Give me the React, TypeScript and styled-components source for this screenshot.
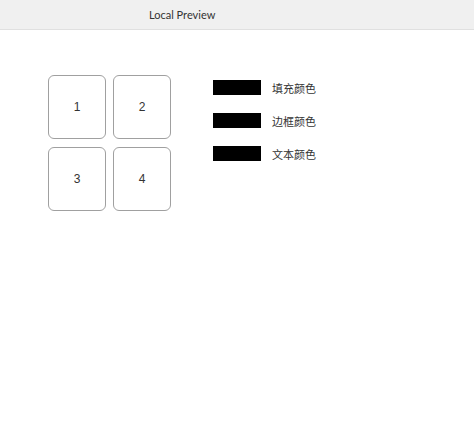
import React from "react";
import styled, { createGlobalStyle } from "styled-components";

const GlobalStyle = createGlobalStyle`
  html, body {
    margin: 0;
    padding: 0;
    background: #ffffff;
    font-family: "Liberation Sans", Arial, sans-serif;
  }
`;

const Page = styled.div`
  width: 474px;
  height: 442px;
  background: #fff;
`;

const Header = styled.div`
  height: 29px;
  background: #f0f0f0;
  border-bottom: 1px solid #e0e0e0;
  display: flex;
  align-items: center;
  padding-left: 149px;
  font-family: Lato, "Open Sans", sans-serif;
  font-size: 11px;
  color: #333;
`;

const Body = styled.div`
  display: flex;
  align-items: flex-start;
  gap: 42px;
  padding: 45px 0 0 48px;
`;

const Grid = styled.div`
  display: grid;
  grid-template-columns: repeat(2, 58px);
  grid-auto-rows: 64px;
  gap: 8px 7px;
`;

const Cell = styled.div`
  box-sizing: border-box;
  border: 1px solid #a0a0a0;
  border-radius: 6px;
  display: flex;
  align-items: center;
  justify-content: center;
  font-size: 12px;
  color: #333;
`;

const Legend = styled.div`
  display: flex;
  flex-direction: column;
  gap: 18px;
  padding-top: 5px;
`;

const LegendRow = styled.div`
  display: flex;
  align-items: center;
  gap: 11px;
  height: 15px;
`;

const Swatch = styled.div<{ $color: string }>`
  width: 48px;
  height: 15px;
  background: ${(props) => props.$color};
`;

const Label = styled.span`
  font-family: "Noto Sans CJK SC", sans-serif;
  font-size: 11px;
  color: #333;
`;

const items = ["填充颜色", "边框颜色", "文本颜色"];

export default function App() {
  return (
    <Page>
      <GlobalStyle />
      <Header>Local Preview</Header>
      <Body>
        <Grid>
          {[1, 2, 3, 4].map((n) => (
            <Cell key={n}>{n}</Cell>
          ))}
        </Grid>
        <Legend>
          {items.map((label) => (
            <LegendRow key={label}>
              <Swatch $color="#000" />
              <Label>{label}</Label>
            </LegendRow>
          ))}
        </Legend>
      </Body>
    </Page>
  );
}
